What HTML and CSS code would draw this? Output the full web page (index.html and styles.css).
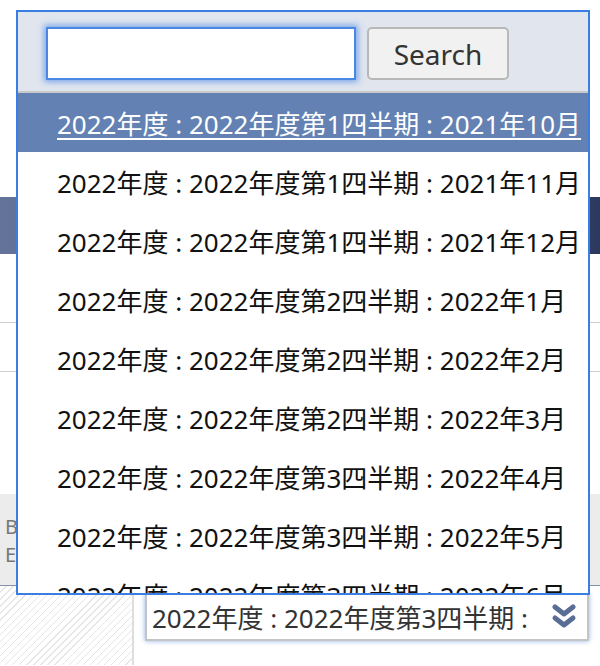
FILE: index.html
```html
<!DOCTYPE html>
<html lang="ja">
<head>
<meta charset="utf-8">
<title>Period picker</title>
<link rel="stylesheet" href="styles.css">
</head>
<body>
<div class="page">
  <div class="top-space"></div>
  <div class="nav-bar"></div>
  <div class="row-a"></div>
  <div class="row-b"></div>
  <div class="row-c"></div>
  <div class="info-band">
    <div class="info-line">B</div>
    <div class="info-line">E</div>
  </div>
  <div class="bottom-row">
    <div class="hatch"></div>
    <div class="select-cell">
      <div class="select-box">
        <span class="select-text">2022年度 : 2022年度第3四半期 :</span>
        <svg class="chev" width="26" height="26" viewBox="0 0 26 26">
          <path d="M4 3 L13 10 L22 3" fill="none" stroke="#5a6d95" stroke-width="5" stroke-linejoin="round" stroke-linecap="round"/>
          <path d="M4 14 L13 21 L22 14" fill="none" stroke="#5a6d95" stroke-width="5" stroke-linejoin="round" stroke-linecap="round"/>
        </svg>
      </div>
    </div>
  </div>

  <div class="dropdown">
    <div class="dd-head">
      <input class="dd-input" type="text">
      <button class="dd-btn" type="button">Search</button>
    </div>
    <ul class="dd-list">
      <li class="dd-item active"><span class="dd-link">2022年度 : 2022年度第1四半期 : 2021年10月</span></li>
      <li class="dd-item">2022年度 : 2022年度第1四半期 : 2021年11月</li>
      <li class="dd-item">2022年度 : 2022年度第1四半期 : 2021年12月</li>
      <li class="dd-item">2022年度 : 2022年度第2四半期 : 2022年1月</li>
      <li class="dd-item">2022年度 : 2022年度第2四半期 : 2022年2月</li>
      <li class="dd-item">2022年度 : 2022年度第2四半期 : 2022年3月</li>
      <li class="dd-item">2022年度 : 2022年度第3四半期 : 2022年4月</li>
      <li class="dd-item">2022年度 : 2022年度第3四半期 : 2022年5月</li>
      <li class="dd-item">2022年度 : 2022年度第3四半期 : 2022年6月</li>
    </ul>
  </div>
</div>
</body>
</html>
```

FILE: styles.css
```css
html, body {
  margin: 0;
  padding: 0;
  background: #ffffff;
}
body {
  font-family: "Noto Sans", "Noto Sans CJK JP", sans-serif;
}
.page {
  position: relative;
  width: 600px;
  height: 666px;
  overflow: hidden;
}
.top-space {
  height: 197px;
}
.nav-bar {
  height: 57px;
  background: linear-gradient(to right, #63739a 0%, #4d5d84 70%, #2a395d 100%);
}
.row-a {
  height: 68px;
  border-bottom: 1px solid #cfcfcf;
}
.row-b {
  height: 48px;
  border-bottom: 1px solid #cfcfcf;
}
.row-c {
  height: 122px;
}
.info-band {
  height: 92px;
  background: #ececec;
  border-bottom: 1px solid #8292ad;
  padding: 19px 0 0 5px;
  box-sizing: border-box;
  color: #777777;
  font-size: 20px;
  line-height: 28px;
}
.bottom-row {
  display: flex;
  height: 79px;
}
.hatch {
  width: 132px;
  border-right: 2px solid #dedede;
  background: repeating-linear-gradient(135deg, #ffffff 0 4px, #e6e6e6 4px 5px);
}
.select-cell {
  flex: 1;
  padding: 7px 0 0 11px;
}
.select-box {
  width: 444px;
  height: 48px;
  box-sizing: border-box;
  border: 2px solid #c4c4c4;
  box-shadow: 0 0 5px #8fb3ea;
  background: #ffffff;
  display: flex;
  align-items: center;
  padding: 0 10px 0 5px;
}
.select-text {
  flex: 1;
  font-family: "Noto Sans", "Noto Sans CJK JP", sans-serif;
  font-size: 26px;
  color: #333333;
  white-space: nowrap;
  overflow: hidden;
}
.chev {
  flex: none;
}

.dropdown {
  position: absolute;
  left: 16px;
  top: 10px;
  width: 574px;
  height: 585px;
  box-sizing: border-box;
  border: 2px solid #3b7ee3;
  background: #ffffff;
  overflow: hidden;
}
.dd-head {
  height: 81px;
  box-sizing: border-box;
  background: #e0e5ee;
  border-bottom: 2px solid #c9c9c9;
  display: flex;
  align-items: flex-start;
  padding: 15px 0 0 28px;
  gap: 11px;
}
.dd-input {
  width: 310px;
  height: 53px;
  box-sizing: border-box;
  border: 2px solid #4a88e2;
  box-shadow: 0 0 6px 2px #7aa6ea;
  background: #ffffff;
  margin: 0;
  outline: none;
}
.dd-btn {
  width: 142px;
  height: 53px;
  box-sizing: border-box;
  border: 2px solid #b8b8b8;
  border-radius: 5px;
  background: #f1f1f1;
  color: #333333;
  font-family: "Noto Sans", sans-serif;
  font-size: 28px;
  padding: 0;
  margin: 0;
}
.dd-list {
  list-style: none;
  margin: 0;
  padding: 0;
}
.dd-item {
  height: 59px;
  display: flex;
  align-items: center;
  padding-left: 39px;
  font-family: "Noto Sans", "Noto Sans CJK JP", sans-serif;
  font-size: 26px;
  color: #111111;
  white-space: nowrap;
}
.dd-item.active {
  background: #6382b3;
  color: #ffffff;
}
.dd-link {
  text-decoration: underline;
  text-underline-offset: 4px;
  text-decoration-thickness: 2px;
}
```
